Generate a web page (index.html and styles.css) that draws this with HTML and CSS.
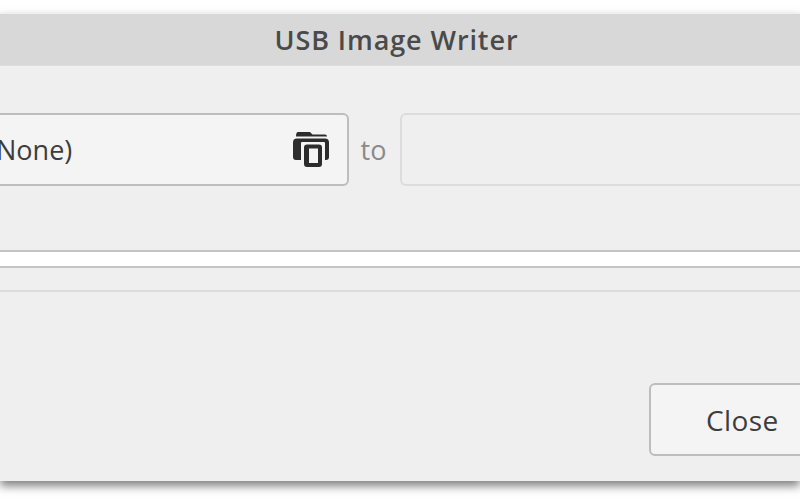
FILE: index.html
```html
<!DOCTYPE html>
<html lang="en">
<head>
<meta charset="utf-8">
<title>USB Image Writer</title>
<link rel="stylesheet" href="styles.css">
</head>
<body>
<div class="window">
  <header class="titlebar"><span class="title-text">USB Image Writer</span></header>
  <main class="content">
    <div class="source-row">
      <div class="field source">
        <span class="field-text">None)</span>
        <svg class="field-icon" viewBox="0 0 36 36" width="36" height="36" aria-hidden="true">
          <path fill="#2c2c2c" d="M5 0h12l2.500 2.500H32q2 0 2 2H3Q3 0 5 0z"/>
          <path fill="#2c2c2c" d="M4 6.500h28q4 0 4 4V25q0 3-3 3h-1V11q0-1-1-1H9q-1 0-1 1v17H3q-3 0-3-3V10.500q0-4 4-4z"/>
          <path fill="#2c2c2c" fill-rule="evenodd" d="M14 12.500h12q3 0 3 3V32q0 3-3 3H14q-3 0-3-3V15.500q0-3 3-3zm2 4V31h9V16.500z"/>
        </svg>
      </div>
      <span class="to">to</span>
      <div class="field target"></div>
    </div>
    <div class="progress"></div>
    <hr class="separator">
    <div class="actions">
      <button class="close" type="button">Close</button>
    </div>
  </main>
</div>
</body>
</html>
```
FILE: styles.css
```css
html, body {
  margin: 0;
  width: 800px;
  height: 500px;
  overflow: hidden;
  background: #fff;
}
body {
  padding-top: 13px;
  box-sizing: border-box;
  font-family: "Open Sans", "Noto Sans", sans-serif;
  color: #3d3d3d;
}
.window {
  height: 467px;
  display: flex;
  flex-direction: column;
  border-top: 1px solid #f0f0f0;
  box-shadow: 0 5px 9px rgba(0, 0, 0, 0.5);
  background: #efefef;
}
.titlebar {
  height: 52px;
  flex: none;
  display: flex;
  align-items: center;
  justify-content: center;
  padding-right: 7px;
  background: #d8d8d8;
  border-bottom: 1px solid #dedede;
  box-sizing: border-box;
}
.title-text {
  font-size: 27px;
  font-weight: 600;
  letter-spacing: 0.9px;
  color: #4a4a4a;
}
.content {
  flex: 1;
  display: flex;
  flex-direction: column;
  padding-top: 47px;
}
.source-row {
  display: flex;
  align-items: center;
  height: 73px;
}
.field {
  height: 73px;
  box-sizing: border-box;
  border-radius: 6px;
}
.source {
  width: 349px;
  flex: none;
  display: flex;
  align-items: center;
  justify-content: space-between;
  padding-right: 18px;
  overflow: hidden;
  background: #f4f4f4;
  border: 2px solid #bdbdbd;
  border-left: 0;
  border-radius: 0 6px 6px 0;
}
.field-text {
  margin-left: -4px;
  font-size: 27px;
  color: #3d3d3d;
}
.field-icon {
  flex: none;
}
.to {
  width: 49px;
  padding-right: 2px;
  flex: none;
  text-align: center;
  font-size: 27px;
  color: #8a8a8a;
}
.target {
  flex: 1;
  background: #efefef;
  border: 2px solid #dcdcdc;
  border-right: 0;
  border-radius: 6px 0 0 6px;
}
.progress {
  height: 18px;
  margin-top: 64px;
  box-sizing: border-box;
  background: #fff;
  border-top: 2px solid #c4c4c4;
  border-bottom: 2px solid #c4c4c4;
}
.separator {
  height: 2px;
  margin: 22px 0 0;
  border: 0;
  background: #dcdcdc;
}
.actions {
  display: flex;
  justify-content: flex-end;
  margin-top: 91px;
  margin-right: -20px;
}
.close {
  width: 171px;
  height: 73px;
  box-sizing: border-box;
  padding: 0 0 0 55px;
  text-align: left;
  background: #f4f4f4;
  border: 2px solid #bdbdbd;
  border-radius: 6px;
  font: 28px "Open Sans", "Noto Sans", sans-serif;
  letter-spacing: 0.4px;
  color: #3d3d3d;
}
```
